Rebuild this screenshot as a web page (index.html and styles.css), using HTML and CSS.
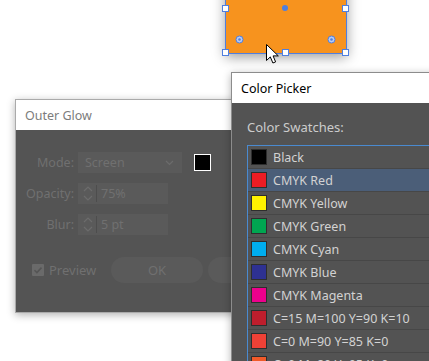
FILE: index.html
```html
<!DOCTYPE html>
<html lang="en">
<head>
    <meta charset="UTF-8">
    <title>Color Picker</title>
    <link rel="stylesheet" href="styles.css">
</head>
<body>
    <div class="canvas">
        <!-- artboard object with selection -->
        <div class="art-rect"></div>
        <span class="handle" style="left:222px;top:5px"></span>
        <span class="handle" style="left:342px;top:5px"></span>
        <span class="handle" style="left:222px;top:49px"></span>
        <span class="handle" style="left:282px;top:49px"></span>
        <span class="handle" style="left:342px;top:49px"></span>
        <span class="center-dot"></span>
        <svg class="corner-widget" style="left:235px;top:35px" width="9" height="9" viewBox="0 0 9 9"><circle cx="4.5" cy="4.5" r="3.5" fill="#b7cbf3" stroke="#4f7fe0"/><circle cx="4.5" cy="4.5" r="1.3" fill="#4f7fe0"/></svg>
        <svg class="corner-widget" style="left:327px;top:35px" width="9" height="9" viewBox="0 0 9 9"><circle cx="4.5" cy="4.5" r="3.5" fill="#b7cbf3" stroke="#4f7fe0"/><circle cx="4.5" cy="4.5" r="1.3" fill="#4f7fe0"/></svg>

        <!-- Outer Glow dialog (inactive) -->
        <div class="window outer-glow">
            <div class="titlebar inactive">Outer Glow</div>
            <div class="og-body">
                <div class="og-row">
                    <span class="og-label">Mode:</span>
                    <div class="og-select">
                        <span>Screen</span>
                        <svg width="9" height="6" viewBox="0 0 9 6"><path d="M1 1l3.5 3.5L8 1" fill="none" stroke="#6c6c6c" stroke-width="1.2"/></svg>
                    </div>
                    <span class="og-color"></span>
                </div>
                <div class="og-row">
                    <span class="og-label">Opacity:</span>
                    <div class="og-field">
                        <svg class="spin" width="12" height="17" viewBox="0 0 12 17"><path d="M2 6l4-4 4 4M2 11l4 4 4-4" fill="none" stroke="#6c6c6c" stroke-width="1.2"/></svg>
                        <span>75%</span>
                    </div>
                </div>
                <div class="og-row">
                    <span class="og-label">Blur:</span>
                    <div class="og-field">
                        <svg class="spin" width="12" height="17" viewBox="0 0 12 17"><path d="M2 6l4-4 4 4M2 11l4 4 4-4" fill="none" stroke="#6c6c6c" stroke-width="1.2"/></svg>
                        <span>5 pt</span>
                    </div>
                </div>
                <div class="og-footer">
                    <span class="og-check">
                        <svg width="12" height="12" viewBox="0 0 12 12"><path d="M2.5 6.2l2.4 2.4 4.6-5" fill="none" stroke="#555" stroke-width="1.6"/></svg>
                    </span>
                    <span class="og-preview">Preview</span>
                    <span class="og-button">OK</span>
                    <span class="og-button">Cancel</span>
                </div>
            </div>
        </div>

        <!-- Color Picker dialog (active) -->
        <div class="window color-picker">
            <div class="titlebar">Color Picker</div>
            <div class="cp-body">
                <div class="cp-label">Color Swatches:</div>
                <ul class="swatch-list">
                    <li><span class="swatch" style="background:#000000"></span>Black</li>
                    <li class="selected"><span class="swatch" style="background:#ed1c24"></span>CMYK Red</li>
                    <li><span class="swatch" style="background:#fff200"></span>CMYK Yellow</li>
                    <li><span class="swatch" style="background:#00a651"></span>CMYK Green</li>
                    <li><span class="swatch" style="background:#00aeef"></span>CMYK Cyan</li>
                    <li><span class="swatch" style="background:#2e3192"></span>CMYK Blue</li>
                    <li><span class="swatch" style="background:#ec008c"></span>CMYK Magenta</li>
                    <li><span class="swatch" style="background:#be1e2d"></span>C=15 M=100 Y=90 K=10</li>
                    <li><span class="swatch" style="background:#ef4136"></span>C=0 M=90 Y=85 K=0</li>
                    <li><span class="swatch" style="background:#f15a29"></span>C=0 M=80 Y=95 K=0</li>
                </ul>
            </div>
        </div>

        <!-- mouse pointer -->
        <svg class="cursor" width="14" height="21" viewBox="0 0 14 21"><path d="M0.5 0.5V16.5L4.3 12.9L6.9 19L9.6 17.9L7.1 11.9H12.3Z" fill="#fff" stroke="#000" stroke-linejoin="round"/></svg>
    </div>
</body>
</html>
```

FILE: styles.css
```css
html, body {
    margin: 0;
    padding: 0;
    background: #ffffff;
}
.canvas {
    position: relative;
    width: 429px;
    height: 361px;
    overflow: hidden;
    font-family: "Noto Sans", "Open Sans", sans-serif;
    font-size: 12px;
}
/* Artboard object */
.art-rect {
    position: absolute;
    left: 225px;
    top: -40px;
    width: 120px;
    height: 92px;
    background: #f7931e;
    border: 1px solid #4f7fe0;
    box-shadow: 0 3px 12px rgba(0, 0, 0, 0.4);
}
.handle {
    position: absolute;
    width: 5px;
    height: 5px;
    background: #ffffff;
    border: 1px solid #4f7fe0;
}
.center-dot {
    position: absolute;
    left: 282px;
    top: 5px;
    width: 6px;
    height: 6px;
    border-radius: 50%;
    background: #4f7fe0;
}
.corner-widget {
    position: absolute;
}
.cursor {
    position: absolute;
    left: 266px;
    top: 44px;
}
/* Windows */
.window {
    position: absolute;
    display: flex;
    flex-direction: column;
    background: #535353;
    box-shadow: 0 2px 8px rgba(0, 0, 0, 0.3);
}
.titlebar {
    height: 30px;
    display: flex;
    align-items: center;
    padding-left: 9px;
    background: #ffffff;
    color: #000000;
    font-size: 12.5px;
    flex-shrink: 0;
}
.titlebar.inactive {
    color: #7c7c7c;
}
/* Outer Glow */
.outer-glow {
    left: 15px;
    top: 99px;
    width: 260px;
    height: 212px;
    border: 1px solid #aaaaaa;
}
.og-body {
    flex: 1;
    padding: 22px 0 0 10px;
    background: #545454;
    color: #707070;
    font-size: 12.5px;
}
.og-row {
    display: flex;
    align-items: center;
    height: 21px;
    margin-bottom: 10px;
}
.og-label {
    width: 48px;
    margin-right: 4px;
    text-align: right;
}
.og-select {
    width: 104px;
    height: 21px;
    box-sizing: border-box;
    padding: 0 8px 0 7px;
    display: flex;
    align-items: center;
    justify-content: space-between;
    background: #5a5a5a;
}
.og-color {
    width: 15px;
    height: 15px;
    margin-left: 12px;
    background: #000000;
    border: 1px solid #ffffff;
}
.og-field {
    width: 90px;
    height: 21px;
    display: flex;
    align-items: center;
    background: #5a5a5a;
}
.og-field .spin {
    margin-left: 4px;
    padding-right: 2px;
    border-right: 1px solid #4d4d4d;
}
.og-field span {
    margin-left: 4px;
}
.og-footer {
    display: flex;
    align-items: center;
    margin-top: 22px;
}
.og-check {
    width: 12px;
    height: 12px;
    margin-left: 6px;
    background: #6a6a6a;
    border-radius: 1px;
    display: flex;
    flex-shrink: 0;
}
.og-preview {
    margin-left: 5px;
    width: 62px;
    font-size: 13px;
    flex-shrink: 0;
}
.og-button {
    width: 92px;
    height: 26px;
    margin-right: 5px;
    border-radius: 13px;
    background: #5a5a5a;
    display: flex;
    align-items: center;
    justify-content: center;
    font-size: 13px;
    flex-shrink: 0;
}
/* Color Picker */
.color-picker {
    left: 231px;
    top: 72px;
    width: 220px;
    height: 300px;
    border: 1px solid #8c8c8c;
}
.cp-body {
    flex: 1;
    padding: 15px 0 0 15px;
    color: #cccccc;
}
.cp-label {
    font-size: 13px;
    height: 18px;
    line-height: 18px;
    margin-bottom: 9px;
}
.swatch-list {
    list-style: none;
    margin: 0;
    padding: 0;
    border: 1px solid #4a8ad0;
    border-right: none;
    font-size: 12.5px;
    color: #d2d2d2;
}
.swatch-list li {
    display: flex;
    align-items: center;
    height: 22px;
    padding-left: 3px;
    border-bottom: 1px solid #474747;
}
.swatch-list li.selected {
    background: #4b5e78;
}
.swatch {
    width: 14px;
    height: 14px;
    margin-right: 6px;
    border: 1px solid #2e2e2e;
}
```
